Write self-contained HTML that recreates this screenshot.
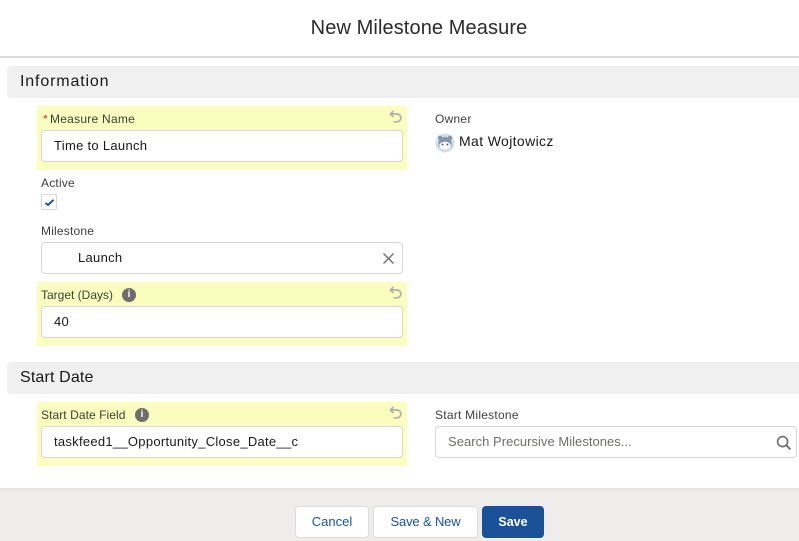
<!DOCTYPE html>
<html><head><meta charset="utf-8"><style>
html,body{margin:0;padding:0;background:#fff}
body{width:799px;height:541px;position:relative;overflow:hidden;font-family:"Liberation Sans",sans-serif;color:#16325c}
div,span,svg{position:absolute;box-sizing:border-box}
.t{white-space:nowrap;line-height:16px}
.l{font-size:12px;color:#3e3e3c;letter-spacing:.2px}
.v{font-size:13px;color:#181818;letter-spacing:.3px}
.sec{left:7px;width:792px;height:32px;background:#f0f0f0;border-radius:4px 0 0 4px}
.h{left:20px;font-size:16px;color:#181818;line-height:20px;white-space:nowrap}
.y{left:37px;width:370px;height:64px;background:#fafdbd}
.i{left:41px;width:362px;height:32px;background:#fff;border:1px solid #d5d5da;border-radius:4px}
.b{top:506px;height:32px;background:#fff;border:1px solid #dcdcdc;border-radius:4px;font-size:13px;line-height:30px;text-align:center;color:#1b5297}
</style></head><body>
<div class="t" style="left:0;width:838px;top:16px;text-align:center;font-size:20px;line-height:24px;color:#2b2b2b;letter-spacing:.1px">New Milestone Measure</div>
<div style="left:0;top:56px;width:799px;height:2px;background:#dadada"></div>

<div class="sec" style="top:66px"></div>
<div class="h" style="top:72px;letter-spacing:.85px">Information</div>

<div class="y" style="top:106px"></div>
<div class="t" style="left:43px;top:111px;font-size:12px;color:#c23934">*</div>
<div class="t l" style="left:50px;top:111px;letter-spacing:.25px">Measure Name</div>
<svg style="left:389px;top:110px" width="13" height="14" viewBox="0 0 13 14"><path d="M4.4 1 1.4 4 4.4 7M1.6 4H8a3.7 3.7 0 0 1 0 7.8H4.5" fill="none" stroke="#b0b0b0" stroke-width="1.7"/></svg>
<div class="i" style="top:130px"></div>
<div class="t v" style="left:54px;top:138px">Time to Launch</div>

<div class="t l" style="left:41px;top:175px">Active</div>
<div style="left:41px;top:194px;width:16px;height:16px;background:#fff;border:1px solid #d5d5da;border-radius:2px"></div>
<svg style="left:45px;top:199px" width="9" height="7" viewBox="0 0 9 7"><path d="M.5 4 3 6 8.5 .8" fill="none" stroke="#1b5297" stroke-width="2"/></svg>

<div class="t l" style="left:41px;top:223px">Milestone</div>
<div class="i" style="top:242px"></div>
<div class="t v" style="left:78px;top:250px">Launch</div>
<svg style="left:382px;top:252px" width="13" height="13" viewBox="0 0 13 13"><path d="M1.5 1.5 11.5 11.5M11.5 1.5 1.5 11.5" fill="none" stroke="#706e6b" stroke-width="1.4"/></svg>

<div class="y" style="top:282px"></div>
<div class="t l" style="left:41px;top:287px;letter-spacing:0">Target (Days)</div>
<div style="left:122px;top:288px;width:14px;height:14px;border-radius:50%;background:#706e6b"></div>
<div class="t" style="left:122px;width:14px;text-align:center;top:287px;font-size:10px;font-weight:bold;color:#fff">i</div>
<svg style="left:389px;top:286px" width="13" height="14" viewBox="0 0 13 14"><path d="M4.4 1 1.4 4 4.4 7M1.6 4H8a3.7 3.7 0 0 1 0 7.8H4.5" fill="none" stroke="#b0b0b0" stroke-width="1.7"/></svg>
<div class="i" style="top:306px"></div>
<div class="t v" style="left:54px;top:314px">40</div>

<div class="t l" style="left:435px;top:111px;letter-spacing:.25px">Owner</div>
<svg style="left:435px;top:133px" width="20" height="20" viewBox="0 0 20 20"><circle cx="10" cy="10" r="9.5" fill="#d3dee9"/><circle cx="5" cy="4.8" r="2.2" fill="#7f97b2"/><circle cx="15" cy="4.8" r="2.2" fill="#7f97b2"/><path d="M3.5 10a6.5 6 0 0 1 13 0v4h-13z" fill="#7f97b2"/><ellipse cx="10" cy="12.5" rx="5.8" ry="3.8" fill="#f7f9fb"/><circle cx="7.5" cy="11.5" r=".9" fill="#3d4a5c"/><circle cx="12.5" cy="11.5" r=".9" fill="#3d4a5c"/></svg>
<div class="t" style="left:459px;top:133px;font-size:14px;color:#181818;letter-spacing:.37px">Mat Wojtowicz</div>

<div class="sec" style="top:362px"></div>
<div class="h" style="top:368px;letter-spacing:.15px">Start Date</div>

<div class="y" style="top:402px"></div>
<div class="t l" style="left:41px;top:407px;letter-spacing:.07px">Start Date Field</div>
<div style="left:135px;top:408px;width:14px;height:14px;border-radius:50%;background:#706e6b"></div>
<div class="t" style="left:135px;width:14px;text-align:center;top:407px;font-size:10px;font-weight:bold;color:#fff">i</div>
<svg style="left:389px;top:406px" width="13" height="14" viewBox="0 0 13 14"><path d="M4.4 1 1.4 4 4.4 7M1.6 4H8a3.7 3.7 0 0 1 0 7.8H4.5" fill="none" stroke="#b0b0b0" stroke-width="1.7"/></svg>
<div class="i" style="top:426px"></div>
<div class="t v" style="left:54px;top:434px;letter-spacing:.28px">taskfeed1__Opportunity_Close_Date__c</div>

<div class="t l" style="left:435px;top:407px;letter-spacing:.25px">Start Milestone</div>
<div class="i" style="left:435px;top:426px"></div>
<div class="t v" style="left:448px;top:434px;color:#706e6b;letter-spacing:.03px">Search Precursive Milestones...</div>
<svg style="left:776px;top:435px" width="15" height="15" viewBox="0 0 15 15"><circle cx="6.6" cy="6.6" r="5" fill="none" stroke="#706e6b" stroke-width="1.6"/><path d="M10.2 10.2 14.3 14.3" stroke="#706e6b" stroke-width="1.9" fill="none"/></svg>

<div style="left:0;top:488px;width:799px;height:53px;background:#eeedec;border-top:2px solid #e4e4e4"></div>
<div class="b" style="left:295px;width:74px">Cancel</div>
<div class="b" style="left:373px;width:105px;letter-spacing:-.15px">Save &amp; New</div>
<div class="b" style="left:482px;width:62px;background:#1b5297;border-color:#1b5297;color:#fff;font-weight:bold;font-size:12.5px">Save</div>
</body></html>
